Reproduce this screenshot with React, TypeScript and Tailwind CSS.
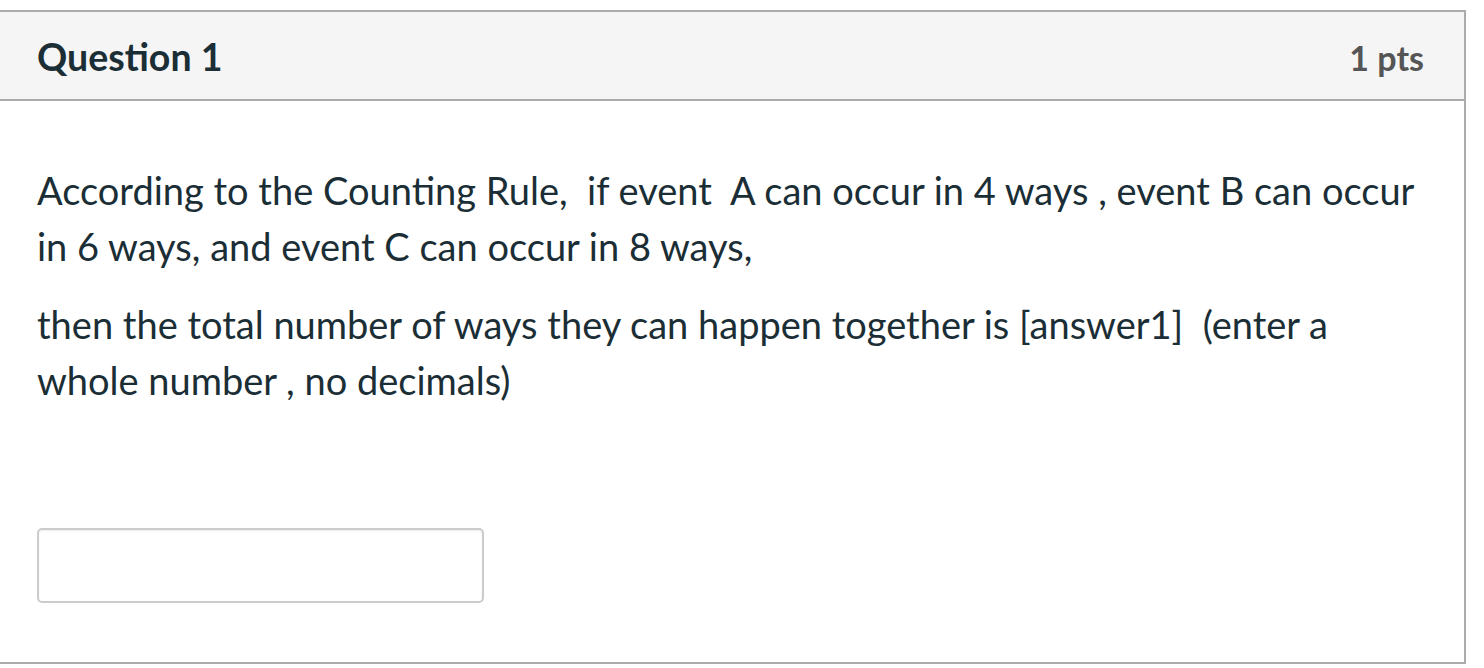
export default function App() {
  return (
    <div className="min-h-screen bg-white pt-[10px] pr-[18px]" style={{ fontFamily: 'Lato, "Open Sans", sans-serif' }}>
      <div className="border-t-2 border-r-2 border-b-2 border-[#ababab] bg-white">
        {/* Header */}
        <div className="flex h-[89px] items-center justify-between border-b-2 border-[#ababab] bg-[#f5f5f5] pt-[3px] pl-[37px] pr-[40px]">
          <h2 className="text-[37.5px] font-bold text-[#1b2e36]">Question 1</h2>
          <span className="text-[34px] font-bold text-[#555555]">1 pts</span>
        </div>

        {/* Body */}
        <div className="pl-[37px] pr-[36px] pt-[61px] pb-[59px] text-[38px] leading-[56px] text-[#1b2e36]">
          <p>
            According to the Counting Rule,{'\u00a0'} if event{'\u00a0'} A can occur in 4 ways , event B can occur in 6 ways, and event C can occur in 8 ways,
          </p>
          <p className="mt-[22px]">
            then the total number of ways they can happen together is [answer1]{'\u00a0'} (enter a whole number , no decimals)
          </p>
          <input
            type="text"
            className="mt-[120px] block h-[75px] w-[447px] rounded-[5px] border-2 border-[#cccccc] bg-white shadow-[inset_0_1px_2px_rgba(0,0,0,0.08)] outline-none"
          />
        </div>
      </div>
    </div>
  );
}
